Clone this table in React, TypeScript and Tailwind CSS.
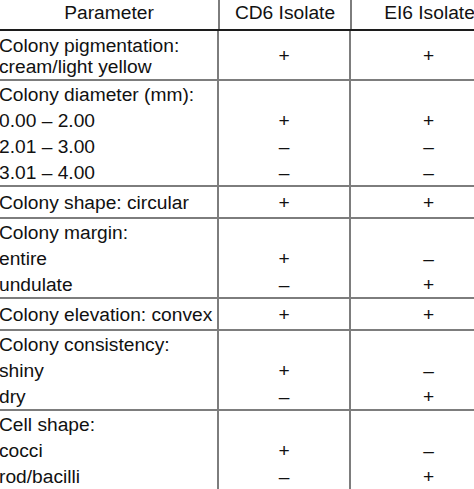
type Row = { label: string; cd6?: string; ei6?: string };

type Group =
  | { kind: "single"; label: string; cd6: string; ei6: string; height: string }
  | { kind: "wrapped"; lines: string[]; cd6: string; ei6: string }
  | { kind: "list"; rows: Row[] };

const groups: Group[] = [
  {
    kind: "wrapped",
    lines: ["Colony pigmentation:", "cream/light yellow"],
    cd6: "+",
    ei6: "+",
  },
  {
    kind: "list",
    rows: [
      { label: "Colony diameter (mm):" },
      { label: "0.00 – 2.00", cd6: "+", ei6: "+" },
      { label: "2.01 – 3.00", cd6: "–", ei6: "–" },
      { label: "3.01 – 4.00", cd6: "–", ei6: "–" },
    ],
  },
  {
    kind: "single",
    label: "Colony shape: circular",
    cd6: "+",
    ei6: "+",
    height: "h-[30px]",
  },
  {
    kind: "list",
    rows: [
      { label: "Colony margin:" },
      { label: "entire", cd6: "+", ei6: "–" },
      { label: "undulate", cd6: "–", ei6: "+" },
    ],
  },
  {
    kind: "single",
    label: "Colony elevation: convex",
    cd6: "+",
    ei6: "+",
    height: "h-[30px]",
  },
  {
    kind: "list",
    rows: [
      { label: "Colony consistency:" },
      { label: "shiny", cd6: "+", ei6: "–" },
      { label: "dry", cd6: "–", ei6: "+" },
    ],
  },
  {
    kind: "list",
    rows: [
      { label: "Cell shape:" },
      { label: "cocci", cd6: "+", ei6: "–" },
      { label: "rod/bacilli", cd6: "–", ei6: "+" },
    ],
  },
];

function Cells({
  height,
  left,
  cd6,
  ei6,
}: {
  height: string;
  left: React.ReactNode;
  cd6?: string;
  ei6?: string;
}) {
  return (
    <div className={`flex ${height}`}>
      <div className="w-[220px] shrink-0 border-r-2 border-[#7d7d7d] flex items-center ml-[-1px]">
        {left}
      </div>
      <div className="w-[132px] shrink-0 border-r-2 border-[#7d7d7d] flex items-center justify-center">
        {cd6}
      </div>
      <div className="w-[155px] shrink-0 flex items-center justify-center">
        {ei6}
      </div>
    </div>
  );
}

export default function App() {
  return (
    <div
      className="w-[474px] h-[489px] overflow-hidden bg-white text-[#111] text-[19.2px] leading-[21px]"
      style={{ fontFamily: '"Liberation Sans", Arial, sans-serif' }}
    >
      <div className="w-[507px]">
        {/* header */}
        <div className="flex h-[31px] border-b-2 border-[#1c1c1c]">
          <div className="w-[220px] shrink-0 border-r-2 border-[#7d7d7d] text-center pt-[2px]">
            Parameter
          </div>
          <div className="w-[132px] shrink-0 border-r-2 border-[#7d7d7d] text-center pt-[2px]">
            CD6 Isolate
          </div>
          <div className="w-[155px] shrink-0 text-center pt-[2px]">
            EI6 Isolate
          </div>
        </div>

        {groups.map((g, i) => (
          <div key={i} className="border-b-2 border-[#7d7d7d]">
            {g.kind === "wrapped" && (
              <Cells
                height="h-[48px]"
                cd6={g.cd6}
                ei6={g.ei6}
                left={
                  <div className="pt-[2px]">
                    {g.lines.map((l) => (
                      <div key={l}>{l}</div>
                    ))}
                  </div>
                }
              />
            )}
            {g.kind === "single" && (
              <Cells height={g.height} cd6={g.cd6} ei6={g.ei6} left={g.label} />
            )}
            {g.kind === "list" &&
              g.rows.map((r) => (
                <Cells
                  key={r.label}
                  height="h-[26px]"
                  cd6={r.cd6}
                  ei6={r.ei6}
                  left={r.label}
                />
              ))}
          </div>
        ))}
      </div>
    </div>
  );
}
